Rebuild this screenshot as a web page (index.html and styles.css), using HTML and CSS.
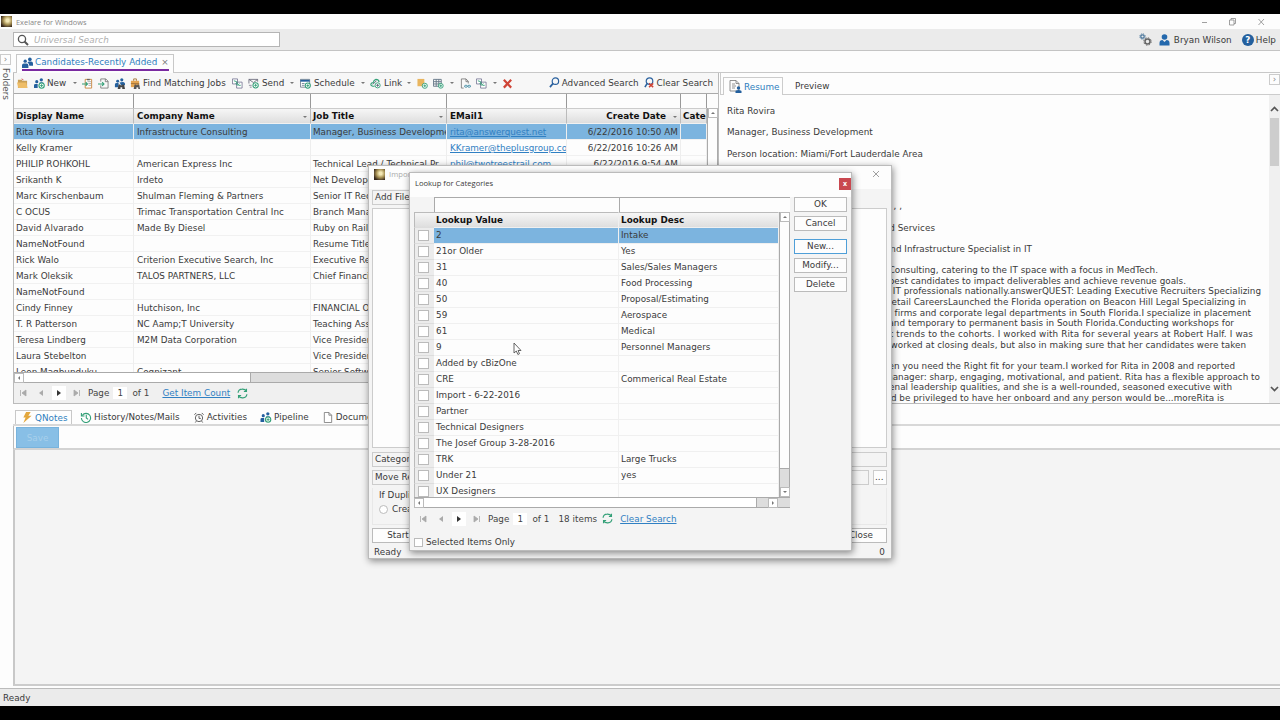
FILE: index.html
```html
<!DOCTYPE html>
<html lang="en">
<head>
  <meta charset="UTF-8" />
  <meta name="viewport" content="width=device-width, initial-scale=1.0"/>
  <title>Exelare for Windows</title>
  <link rel="stylesheet" href="styles.css">
</head>
<body>

<svg class="defs" width="0" height="0">
  <symbol id="people" viewBox="0 0 12 12"><g fill="#24609e"><circle cx="3.5" cy="4.5" r="1.8"/><circle cx="8.6" cy="2.6" r="2"/><path d="M0 12V9q0-2 2-2h3q2 0 2 2v3zM6 6.300q.5-1.300 2-1.300h2q2 0 2 2v2.500H8Q8 7 6 6.300z"/></g></symbol>
  <symbol id="people-add" viewBox="0 0 12 12"><g fill="#24609e"><circle cx="3" cy="4" r="1.700"/><circle cx="8" cy="2" r="1.800"/><path d="M0 11V8q0-1.500 1.500-1.500H4V11zM6 5q4-1 5 1H6z"/></g><circle cx="8.300" cy="8.300" r="2.900" fill="#fff" stroke="#34a078" stroke-width="1.200"/><path d="M8.300 6.700v3.200M6.700 8.300h3.200" stroke="#34a078"/></symbol>
  <symbol id="people-find" viewBox="0 0 12 12"><g fill="#24609e"><circle cx="4" cy="3.500" r="1.600"/><circle cx="8.500" cy="2" r="1.700"/><path d="M1 10V7q0-1.500 2-1.500h2V10zM6 5q5-1.500 6 1v2H8z"/></g><path d="M5 7h2v1h2V7h2l1 5H9v-2H7v2H4z" fill="#444"/></symbol>
  <symbol id="folder" viewBox="0 0 12 12"><path d="M1 11V2h4l1 1h5v8z" fill="#c99f55"/><path d="M0 5h10l1.500 6H1.500z" fill="#eebd67"/><path d="M5 1l2 1" stroke="#c55" /></symbol>
  <symbol id="clip" viewBox="0 0 12 12"><path d="M3.500 1.500h7v9.500h-7z" fill="#fff" stroke="#c8873e"/><path d="M6 4h4M7 6h3M7 8h3" stroke="#888" stroke-width=".7"/><path d="M5.500 1h3v1.500h-3z" fill="#666"/><path d="M0 6.500h6M4 4.500l2 2-2 2" fill="none" stroke="#34a078" stroke-width="1.200"/></symbol>
  <symbol id="page-in" viewBox="0 0 12 12"><path d="M3 4V1h5.500L11 3.500V11H3V8M8 1v3h3" fill="none" stroke="#666" stroke-width=".8"/><path d="M0 6.500h6.500M4.500 4.500l2 2-2 2" fill="none" stroke="#34a078" stroke-width="1.200"/></symbol>
  <symbol id="case-find" viewBox="0 0 12 12"><path d="M1 3h9v7H1z" fill="#e3a451"/><path d="M4 3V1h3v2M1 6h9" fill="none" stroke="#a6763a"/><path d="M5 7h2v1h1V7h2l1 5H9v-2H7v2H4z" fill="#555"/></symbol>
  <symbol id="copy-go" viewBox="0 0 12 12"><path d="M.5 1h5.500v5.500H.5zM5 4.500h6V11H5z" fill="#fff" stroke="#668" stroke-width=".8"/><path d="M2 3q4 0 4 4M4 5.500L6 8l2-2M7 8h2.500" fill="none" stroke="#34a078"/></symbol>
  <symbol id="mail-add" viewBox="0 0 12 12"><path d="M1 6V1.500h9.500V4M1 1.500l5 3.500 4.500-3.500" fill="none" stroke="#667" stroke-width=".9"/><circle cx="8.300" cy="8" r="2.900" fill="#fff" stroke="#34a078" stroke-width="1.100"/><path d="M8.300 6.500v3M6.800 8h3" stroke="#34a078"/><path d="M1 8h3M2 10h2" stroke="#889"/></symbol>
  <symbol id="cal-add" viewBox="0 0 12 12"><path d="M.5 1.500h10V10H.5z" fill="#fff" stroke="#567" stroke-width=".8"/><path d="M.5 2h10v2H.5z" fill="#24609e"/><path d="M2 6h3M2 8h3" stroke="#789"/><circle cx="8.500" cy="8.300" r="2.800" fill="#fff" stroke="#34a078" stroke-width="1.100"/><path d="M8.500 6.800v3M7 8.300h3" stroke="#34a078"/></symbol>
  <symbol id="link-add" viewBox="0 0 12 12"><path d="M5 9H3Q.5 8.500 1 6.500 1.500 5 3.500 5 4 2 6.500 1.500q3 0 3.500 3" fill="none" stroke="#34a078" stroke-width="1.200"/><path d="M3 7l4-4" stroke="#567"/><circle cx="8.300" cy="8" r="2.800" fill="#fff" stroke="#34a078"/><path d="M8.300 6.500v3M6.800 8h3" stroke="#567"/></symbol>
  <symbol id="note-add" viewBox="0 0 12 12"><path d="M.5 1H8v8H.5z" fill="#e9b55e"/><circle cx="8.500" cy="8.500" r="2.800" fill="#fff" stroke="#34a078"/><path d="M8.500 7v3M7 8.500h3" stroke="#34a078"/></symbol>
  <symbol id="grid-add" viewBox="0 0 12 12"><path d="M.5 1.500H9V9H.5zM.5 4H9M.5 6.500H9M3.500 1.500V9M6.300 1.500V9" fill="none" stroke="#678"/><circle cx="8.500" cy="8.500" r="2.600" fill="#fff" stroke="#34a078"/><path d="M8.500 7v3M7 8.500h3" stroke="#34a078"/></symbol>
  <symbol id="doc-link" viewBox="0 0 12 12"><path d="M4 11H1.500V1h5L9 3.500V6M6.500 1v3H9" fill="none" stroke="#666" stroke-width=".8"/><rect x="5" y="8" width="3" height="2" rx="1" fill="none" stroke="#34849e"/><rect x="8.500" y="8" width="3" height="2" rx="1" fill="none" stroke="#34849e"/></symbol>
  <symbol id="page" viewBox="0 0 12 12"><path d="M2 .5h5L10 3.500V11.500H2zM7 .5v3h3" fill="#fff" stroke="#777" stroke-width=".9"/></symbol>
  <symbol id="glass" viewBox="0 0 12 12"><circle cx="7" cy="4.500" r="3.500" fill="none" stroke="#29609e" stroke-width="1.300"/><path d="M4.500 7L1 11" stroke="#29609e" stroke-width="1.800"/></symbol>
  <symbol id="sync" viewBox="0 0 12 12"><path d="M1.200 5.200Q1.500 1.500 5.500 1.300 8.500 1 10.300 3.500M10.300.8v3H7.500M10.800 6.800Q10.300 10.500 6.500 10.700 3.500 11 1.700 8.500M1.700 11.200v-3h2.800" fill="none" stroke="#34a078" stroke-width="1.300"/></symbol>
  <symbol id="first" viewBox="0 0 8 8"><path d="M1.500 1v6M7 1L3 4l4 3z" stroke="currentColor" fill="currentColor" stroke-width=".8"/></symbol>
  <symbol id="prev" viewBox="0 0 8 8"><path d="M6 1L2 4l4 3z" fill="currentColor"/></symbol>
</svg>

<div class="app">
  <header class="titlebar">
    <i class="logo"></i><span>Exelare for Windows</span>
    <svg class="win-btns" width="70" height="12" viewBox="0 0 70 12"><path d="M1 6.500h5M28.500 4h4.500v5h-4.500zM30 4V2.500h4.500v5H33M57.500 3l5.500 6M63 3l-5.500 6" fill="none" stroke="#888" stroke-width=".8"/></svg>
  </header>

  <div class="searchbar">
    <div class="search"><svg width="12" height="12" viewBox="0 0 12 12"><circle cx="5" cy="5" r="3.600" fill="none" stroke="#555" stroke-width="1.300"/><path d="M7.500 7.500L11 11" stroke="#555" stroke-width="1.900"/></svg><em>Universal Search</em></div>
    <div class="user">
      <svg width="13" height="13" viewBox="0 0 13 13"><circle cx="3.500" cy="3.500" r="1.700" fill="none" stroke="#4c779c" stroke-width="1.200"/><circle cx="3.500" cy="3.500" r="2.700" fill="none" stroke="#4c779c" stroke-dasharray="1.100 1.020"/><circle cx="8.500" cy="8.500" r="2.500" fill="none" stroke="#666" stroke-width="1.500"/><circle cx="8.500" cy="8.500" r="3.700" fill="none" stroke="#666" stroke-dasharray="1.500 1.400"/></svg>
      <svg class="me" width="11" height="12" viewBox="0 0 11 12"><circle cx="5.500" cy="3" r="2.800" fill="#2469ad"/><path d="M.5 11.500V9q0-3 3-3l2 2 2-2q3 0 3 3v2.500z" fill="#2469ad"/></svg>
      <span class="name">Bryan Wilson</span>
      <span class="help-ico">?</span><span>Help</span>
    </div>
  </div>

  <div class="main">
    <aside class="folders"><b class="chev">&#8250;</b><span>Folders</span></aside>

    <div class="work">
      <div class="doc-tabs">
        <div class="doc-tab"><svg width="11" height="11"><use href="#people"/></svg><span>Candidates-Recently Added</span><i>×</i></div>
      </div>

      <div class="split">
        <section class="list">
          <div class="toolbar">
            <svg><use href="#folder"/></svg>
            <svg class="g4"><use href="#people-add"/></svg><span class="w-new">New</span><i class="dd"></i>
            <svg class="g3"><use href="#clip"/></svg>
            <svg class="g3"><use href="#page-in"/></svg>
            <svg class="g3"><use href="#people-find"/></svg>
            <svg class="g3"><use href="#case-find"/></svg><span class="w-find">Find Matching Jobs</span>
            <svg><use href="#copy-go"/></svg>
            <svg class="g3"><use href="#mail-add"/></svg><span class="w-send">Send</span><i class="dd"></i>
            <svg class="g4"><use href="#cal-add"/></svg><span class="w-sched">Schedule</span><i class="dd"></i>
            <svg class="g3"><use href="#link-add"/></svg><span class="w-link">Link</span><i class="dd"></i>
            <svg class="g4"><use href="#note-add"/></svg>
            <svg class="g3"><use href="#grid-add"/></svg><i class="dd gap"></i>
            <svg class="g4"><use href="#doc-link"/></svg>
            <svg class="g3"><use href="#copy-go"/></svg><i class="dd gap"></i>
            <svg class="g3" viewBox="0 0 12 12"><path d="M2 2l8 8.500M10 2l-8 8.500" stroke="#cf4436" stroke-width="2.400"/></svg>
            <div class="right">
              <svg><use href="#glass"/></svg><span>Advanced Search</span>
              <svg class="g3" viewBox="0 0 12 12"><circle cx="6" cy="4.500" r="3.600" fill="none" stroke="#29609e" stroke-width="1.300"/><path d="M3.500 7L1 11" stroke="#29609e" stroke-width="1.800"/><path d="M5.500 7l4.500 4M10 7l-4.500 4" stroke="#cf4436" stroke-width="1.600"/></svg><span>Clear Search</span>
            </div>
          </div>
          <div class="grid">
            <div class="grid-body">
              <div class="row filter"><span></span><span></span><span></span><span></span><span></span><span></span></div>
              <div class="row head"><span>Display Name</span><span>Company Name<i class="dd"></i></span><span>Job Title<i class="dd"></i></span><span>EMail1</span><span class="date">Create Date<i class="dd"></i></span><span>Cate</span></div>
              <div class="row sel"><span>Rita Rovira</span><span>Infrastructure Consulting</span><span>Manager, Business Developme</span><span><a>rita@answerquest.net</a></span><span class="date">6/22/2016 10:50 AM</span><span></span></div>
              <div class="row"><span>Kelly Kramer</span><span></span><span></span><span><a>KKramer@theplusgroup.co</a></span><span class="date">6/22/2016 10:26 AM</span><span></span></div>
              <div class="row"><span>PHILIP ROHKOHL</span><span>American Express Inc</span><span>Technical Lead / Technical Pr</span><span><a>phil@twotreestrail.com</a></span><span class="date">6/22/2016 9:54 AM</span><span></span></div>
              <div class="row"><span>Srikanth K</span><span>Irdeto</span><span>Net Developer</span><span></span><span></span><span></span></div>
              <div class="row"><span>Marc Kirschenbaum</span><span>Shulman Fleming &amp; Partners</span><span>Senior IT Recruiter</span><span></span><span></span><span></span></div>
              <div class="row"><span>C OCUS</span><span>Trimac Transportation Central Inc</span><span>Branch Manager</span><span></span><span></span><span></span></div>
              <div class="row"><span>David Alvarado</span><span>Made By Diesel</span><span>Ruby on Rails</span><span></span><span></span><span></span></div>
              <div class="row"><span>NameNotFound</span><span></span><span>Resume Title</span><span></span><span></span><span></span></div>
              <div class="row"><span>Rick Walo</span><span>Criterion Executive Search, Inc</span><span>Executive Recruiter</span><span></span><span></span><span></span></div>
              <div class="row"><span>Mark Oleksik</span><span>TALOS PARTNERS, LLC</span><span>Chief Financial</span><span></span><span></span><span></span></div>
              <div class="row"><span>NameNotFound</span><span></span><span></span><span></span><span></span><span></span></div>
              <div class="row"><span>Cindy Finney</span><span>Hutchison, Inc</span><span>FINANCIAL O</span><span></span><span></span><span></span></div>
              <div class="row"><span>T. R Patterson</span><span>NC Aamp;T University</span><span>Teaching Assistant</span><span></span><span></span><span></span></div>
              <div class="row"><span>Teresa Lindberg</span><span>M2M Data Corporation</span><span>Vice President</span><span></span><span></span><span></span></div>
              <div class="row"><span>Laura Stebelton</span><span></span><span>Vice President</span><span></span><span></span><span></span></div>
              <div class="row"><span>Leon Magbunduku</span><span>Cognizant</span><span>Senior Software</span><span></span><span></span><span></span></div>
            </div>
            <div class="vscroll"><b class="up"></b></div>
          </div>
          <div class="hscroll"><b class="left"></b><i class="thumb"></i></div>
          <div class="pager">
            <svg><use href="#first"/></svg><svg><use href="#prev"/></svg><svg class="on"><use href="#prev"/></svg><svg class="flip"><use href="#first"/></svg>
            <span>Page</span><span class="num">1</span><span class="of">of 1</span><a>Get Item Count</a><svg class="sync"><use href="#sync"/></svg>
          </div>
        </section>

        <section class="viewer">
          <div class="view-tabs">
            <div class="view-tab active"><svg width="13" height="13" viewBox="0 0 13 13"><path d="M1 .5h6L10 3.500V11H1zM7 .5v3h3M3 4h3M3 6h4M3 8h3" fill="none" stroke="#777" stroke-width=".8"/><circle cx="9.500" cy="8" r="1.700" fill="#24609e"/><path d="M6.500 13v-1.500q0-1.500 3-1.500t3 1.500V13z" fill="#24609e"/></svg>Resume</div>
            <div class="view-tab">Preview</div>
            <b class="chev">&#8250;</b>
          </div>
          <div class="resume">
            <div class="resume-text">
              <p>Rita Rovira</p><p>&nbsp;</p>
              <p>Manager, Business Development</p><p>&nbsp;</p>
              <p>Person location: Miami/Fort Lauderdale Area</p>
              <div class="tail">
                <p>, ,</p>
                <p>and Services</p>
                <p>and Infrastructure Specialist in IT</p>
                <p>Consulting, catering to the IT space with a focus in MedTech.</p>
                <p>best candidates to impact deliverables and achieve revenue goals.</p>
                <p>IT professionals nationally.answerQUEST: Leading Executive Recruiters Specializing</p>
                <p>Retail CareersLaunched the Florida operation on Beacon Hill Legal Specializing in</p>
                <p>law firms and corporate legal departments in South Florida.I specialize in placement</p>
                <p>and temporary to permanent basis in South Florida.Conducting workshops for</p>
                <p>t trends to the cohorts. I worked with Rita for several years at Robert Half. I was</p>
                <p>worked at closing deals, but also in making sure that her candidates were taken</p>
                <p>when you need the Right fit for your team.I worked for Rita in 2008 and reported</p>
                <p>manager: sharp, engaging, motivational, and patient. Rita has a flexible approach to</p>
                <p>enal leadership qualities, and she is a well-rounded, seasoned executive with</p>
                <p>would be privileged to have her onboard and any person would be...moreRita is</p>
              </div>
            </div>
            <div class="wscroll">
              <svg width="9" height="6" viewBox="0 0 9 6"><path d="M1 5l3.500-3.500L8 5" fill="none" stroke="#555" stroke-width="1.700"/></svg>
              <i></i>
              <svg class="down" width="9" height="6" viewBox="0 0 9 6"><path d="M1 1l3.500 3.500L8 1" fill="none" stroke="#555" stroke-width="1.700"/></svg>
            </div>
          </div>
        </section>
      </div>

      <div class="note-tabs">
        <div class="note-tab active"><svg viewBox="0 0 12 12"><path d="M5 0h5L7.500 4H11L2 12l2.500-6H2z" fill="#e3a73d"/></svg>QNotes</div>
        <div class="note-tab"><svg viewBox="0 0 12 12"><path d="M2 3.500a5 5 0 1 1-1 3M1 1v3.300h3.300M6.300 3v3.500l2 1.500" fill="none" stroke="#34a078" stroke-width="1.200"/></svg>History/Notes/Mails</div>
        <div class="note-tab"><svg viewBox="0 0 12 12"><circle cx="6" cy="6.500" r="4" fill="none" stroke="#555"/><path d="M6 4v3h2M1 3l2-2M11 3L9 1M3 10l-1 1.500M9 10l1 1.500" fill="none" stroke="#555"/></svg>Activities</div>
        <div class="note-tab"><svg><use href="#people-add"/></svg>Pipeline</div>
        <div class="note-tab"><svg><use href="#page"/></svg>Documents</div>
      </div>
      <div class="save-row"><button class="save">Save</button></div>
      <div class="notes"></div>
    </div>
  </div>

  <footer class="status">Ready</footer>
</div>

<div class="dialog import">
  <div class="import-title"><i class="logo"></i><span>Import</span><svg width="8" height="8" viewBox="0 0 8 8"><path d="M1 1l6 6M7 1L1 7" stroke="#888" stroke-width=".8"/></svg></div>
  <div class="field add">Add Files</div>
  <div class="files"></div>
  <div class="field cat">Categories</div>
  <div class="move"><div class="field">Move Resume</div><div class="field dots">...</div></div>
  <div class="dup"><span>If Duplicate</span><label><i class="radio"></i>Create</label></div>
  <div class="actions"><div class="btn">Start</div><div class="btn">Close</div></div>
  <div class="import-status"><span>Ready</span><span>0</span></div>
</div>

<div class="dialog lookup">
  <div class="lookup-title"><span>Lookup for Categories</span><b>x</b></div>
  <div class="lookup-body">
    <div class="lookup-list">
      <div class="lrow filter"><i></i><span></span><span></span></div>
      <div class="lgrid">
        <div class="lrows">
          <div class="lrow head"><i></i><span>Lookup Value</span><span>Lookup Desc</span></div>
          <div class="lrow sel"><i></i><span>2</span><span>Intake</span></div>
          <div class="lrow"><i></i><span>21or Older</span><span>Yes</span></div>
          <div class="lrow"><i></i><span>31</span><span>Sales/Sales Managers</span></div>
          <div class="lrow"><i></i><span>40</span><span>Food Processing</span></div>
          <div class="lrow"><i></i><span>50</span><span>Proposal/Estimating</span></div>
          <div class="lrow"><i></i><span>59</span><span>Aerospace</span></div>
          <div class="lrow"><i></i><span>61</span><span>Medical</span></div>
          <div class="lrow"><i></i><span>9</span><span>Personnel Managers</span></div>
          <div class="lrow"><i></i><span>Added by cBizOne</span><span></span></div>
          <div class="lrow"><i></i><span>CRE</span><span>Commerical Real Estate</span></div>
          <div class="lrow"><i></i><span>Import - 6-22-2016</span><span></span></div>
          <div class="lrow"><i></i><span>Partner</span><span></span></div>
          <div class="lrow"><i></i><span>Technical Designers</span><span></span></div>
          <div class="lrow"><i></i><span>The Josef Group 3-28-2016</span><span></span></div>
          <div class="lrow"><i></i><span>TRK</span><span>Large Trucks</span></div>
          <div class="lrow"><i></i><span>Under 21</span><span>yes</span></div>
          <div class="lrow"><i></i><span>UX Designers</span><span></span></div>
        </div>
        <div class="vscroll"><b class="up"></b><i class="thumb"></i><b class="down"></b></div>
      </div>
      <div class="hscroll"><b class="left"></b><i class="thumb"></i><b class="rt"></b></div>
      <div class="pager">
        <svg><use href="#first"/></svg><svg><use href="#prev"/></svg><svg class="on"><use href="#prev"/></svg><svg class="flip"><use href="#first"/></svg>
        <span>Page</span><span class="num">1</span><span class="of">of 1</span><span class="items">18 items</span><svg class="sync"><use href="#sync"/></svg><a>Clear Search</a>
      </div>
      <label class="only"><i></i>Selected Items Only</label>
    </div>
    <div class="lookup-btns">
      <div class="btn">OK</div>
      <div class="btn">Cancel</div>
      <div class="btn focus">New...</div>
      <div class="btn">Modify...</div>
      <div class="btn">Delete</div>
    </div>
  </div>
</div>

<svg class="cursor" width="9" height="14" viewBox="0 0 9 14"><path d="M1 1v10l2.300-2 1.600 3.500 1.600-.8L5 8.500h3z" fill="#fff" stroke="#555" stroke-width=".9"/></svg>

</body>
</html>
```
FILE: styles.css
```css
* {
  box-sizing: border-box;
}

body {
  margin: 0;
  width: 1280px;
  height: 720px;
  overflow: hidden;
  background: #000;
  color: #3a3a3a;
  font-family: Verdana, "DejaVu Sans", sans-serif;
  font-size: 8.8px;
  line-height: 12px;
  letter-spacing: 0.03px;
  white-space: nowrap;
}

svg {
  display: block;
  flex: none;
}

i {
  font-style: normal;
}

p {
  margin: 0;
}

a {
  color: #3080c3;
  text-decoration: underline;
}

.defs,
.cursor {
  position: absolute;
}

.cursor {
  left: 513px;
  top: 342px;
}

.app {
  margin-top: 14px;
  height: 692px;
  background: #fdfdfd;
  display: flex;
  flex-direction: column;
}

.logo {
  width: 11px;
  height: 11px;
  background: radial-gradient(circle at 60% 40%, #f3e7b4 0 15%, #a89255 45%, #35261b 80%);
  flex: none;
}

/* top bars */
.titlebar {
  display: flex;
  align-items: center;
  height: 15px;
  padding-left: 1px;
  font-family: "Open Sans", "Noto Sans", sans-serif;
  font-size: 7.4px;
  letter-spacing: 0;
  color: #888;
}

.titlebar span {
  margin-left: 4px;
}

.win-btns {
  margin-left: auto;
  margin-right: 9px;
}

.searchbar {
  height: 22px;
  display: flex;
  align-items: center;
  justify-content: space-between;
  background: #ebebeb;
  border-bottom: 1px solid #c4c4c4;
  padding: 0 4px 0 13px;
}

.search {
  display: flex;
  align-items: center;
  width: 267px;
  height: 15px;
  background: #fff;
  border: 1px solid #b5b5b5;
  padding-left: 3px;
}

.search em {
  color: #b0b0b0;
  margin-left: 5px;
}

.user {
  display: flex;
  align-items: center;
}

.user .me {
  margin: 0 4px 0 7px;
}

.user .name {
  width: 68px;
}

.help-ico {
  width: 12px;
  height: 12px;
  border-radius: 50%;
  background: #24609e;
  color: #fff;
  font-weight: bold;
  text-align: center;
  margin-right: 2px;
}

/* main frame */
.main {
  display: flex;
  height: 638px;
  border-bottom: 1px solid #bbb;
}

.folders {
  width: 13px;
  flex: none;
  display: flex;
  flex-direction: column;
  align-items: center;
  padding: 3px 2px 0 0;
  color: #555;
}

.folders span {
  writing-mode: vertical-rl;
  margin-top: 3px;
}

.chev {
  width: 11px;
  height: 11px;
  border: 1px solid #ccc;
  color: #888;
  line-height: 8px;
  font-weight: normal;
  text-align: center;
  flex: none;
}

.work {
  width: 1267px;
  display: flex;
  flex-direction: column;
}

.doc-tabs {
  height: 22px;
  padding: 3px 0 0 3px;
  border-bottom: 1px solid #c8c8c8;
}

.doc-tab {
  display: flex;
  align-items: center;
  width: 158px;
  height: 19px;
  padding: 0 0 4px 5px;
  background: linear-gradient(#7a2aa0, #7a2aa0) 5px 14px / 147px 2px no-repeat #fdfdfd;
  border: 1px solid #c8c8c8;
  border-bottom: 0;
  color: #2f7fbd;
}

.doc-tab span {
  margin: 0 4px 0 2px;
}

.doc-tab i {
  color: #777;
}

.split {
  display: flex;
  height: 331px;
}

.list {
  width: 706px;
  border-left: 1px solid #bbb;
  border-right: 1px solid #bbb;
  flex: none;
}

.toolbar {
  display: flex;
  align-items: center;
  height: 20px;
  padding-left: 3px;
  background: #f7f7f7;
}

.toolbar svg {
  width: 11px;
  height: 11px;
}

.toolbar span {
  margin-left: 3px;
}

.dd {
  width: 0;
  border: 2px solid transparent;
  border-top-color: #777;
  margin-top: 2px;
  flex: none;
}

.toolbar .g3 { margin-left: 5px; }
.toolbar .g4 { margin-left: 6px; }
.toolbar .gap { margin-left: 6px; }
.toolbar .w-new { width: 26px; margin-left: 2px; }
.toolbar .w-find { width: 89px; margin-left: 2px; }
.w-send { width: 28px; }
.w-sched { width: 47px; }
.w-link { width: 23px; }

.toolbar .right {
  display: flex;
  margin-left: auto;
  padding-right: 5px;
}

.toolbar .right span {
  margin-left: 2px;
}

/* candidate grid */
.grid {
  display: flex;
  height: 279px;
  border-top: 1px solid #aaa;
  overflow: hidden;
}

.grid-body {
  width: 693px;
  overflow: hidden;
}

.row {
  display: grid;
  grid-template-columns: 120px 177px 136px 120px 114px 26px;
  height: 16px;
}

.row span {
  border-right: 1px solid #eee;
  border-bottom: 1px solid #f1f1f1;
  padding: 2px 2px 0;
  overflow: hidden;
}

.row span:nth-child(2),
.row span:nth-child(4) {
  padding-left: 3px;
}

.row a {
  letter-spacing: -0.05px;
}

.row .date {
  text-align: right;
}

.row.filter {
  height: 14px;
}

.row.filter span {
  border-right-color: #999;
  border-bottom: 0;
}

.row.head span {
  display: flex;
  font-weight: bold;
  color: #111;
  background: linear-gradient(#f6f6f6, #dedede);
  border-top: 1px solid #ccc;
  border-right-color: #bbb;
  padding-top: 1px;
}

.row.head .dd {
  margin: 6px 1px 0 auto;
}

.row.head .date {
  justify-content: flex-end;
}

.row.head .date .dd {
  margin-left: 7px;
}

.row.sel span {
  background: #7cb4df;
}

.vscroll {
  display: flex;
  flex-direction: column;
  width: 11px;
  background: #fdfdfd;
  border: solid #aaa;
  border-width: 0 1px;
}

.grid .vscroll {
  margin-top: 14px;
}

.vscroll b,
.hscroll b {
  display: grid;
  place-items: center;
  width: 10px;
  height: 10px;
  background: #fff;
  border: 1px solid #bbb;
  flex: none;
}

.vscroll b::before,
.hscroll b::before {
  content: "";
  border: 2px solid transparent;
}

.vscroll .up::before { border-bottom-color: #777; margin-top: -2px; }
.vscroll .down::before { border-top-color: #777; margin-bottom: -2px; }
.hscroll .left::before { border-right-color: #777; margin-left: -2px; }
.hscroll .rt::before { border-left-color: #777; margin-right: -2px; }

.hscroll {
  display: flex;
  height: 11px;
  background: #ddd;
  border: solid #aaa;
  border-width: 1px 0;
}

.hscroll .thumb {
  width: 227px;
  background: #fff;
  border-right: 1px solid #aaa;
}

.pager {
  display: flex;
  align-items: center;
  height: 21px;
  background: #f0f0f0;
  color: #444;
  border-bottom: 1px solid #bbb;
  padding-left: 5px;
}

.pager svg {
  width: 8px;
  height: 8px;
  margin-right: 10px;
  color: #aaa;
}

.pager svg.on {
  transform: scaleX(-1);
  color: #333;
  background: #fff;
  box-shadow: 0 0 0 3px #fff;
}

.pager svg.flip {
  transform: scaleX(-1);
  margin-right: 7px;
}

.pager .num {
  width: 14px;
  text-align: center;
  background: #fff;
  margin: 0 5px 0 4px;
}

.pager a {
  margin-left: 13px;
}

.pager svg.sync {
  width: 11px;
  height: 11px;
  margin: 0 0 0 7px;
}

/* resume viewer */
.viewer {
  width: 560px;
  margin-left: 1px;
  border-bottom: 1px solid #bbb;
}

.view-tabs {
  display: flex;
  height: 22px;
  padding: 4px 0 0 2px;
  border-bottom: 1px solid #ccc;
  border-left: 1px solid #ccc;
}

.view-tab {
  display: flex;
  align-items: center;
  height: 18px;
  padding-left: 12px;
}

.view-tab.active {
  width: 60px;
  padding-left: 5px;
  background: #fdfdfd;
  border: 1px solid #ccc;
  border-bottom: 0;
  color: #2f7fbd;
}

.view-tab svg {
  margin-right: 2px;
}

.view-tabs .chev {
  margin: -3px 0 0 auto;
}

.resume {
  display: flex;
  height: 308px;
  padding-left: 7px;
  overflow: hidden;
}

.resume-text {
  flex: 1;
  padding-top: 11px;
  line-height: 10.65px;
}

.tail p {
  text-align: right;
  width: 520px;
}

/* line ends of the wrapped resume text */
.tail p:nth-child(1) { width: 175px; margin-top: 42px; }
.tail p:nth-child(2) { width: 208px; margin-top: 10.65px; }
.tail p:nth-child(3) { width: 305px; margin: 10.65px 0; }
.tail p:nth-child(4) { width: 431px; }
.tail p:nth-child(5) { width: 459px; }
.tail p:nth-child(6) { width: 534px; }
.tail p:nth-child(7) { width: 519px; }
.tail p:nth-child(8) { width: 524px; }
.tail p:nth-child(9) { width: 507px; }
.tail p:nth-child(10) { width: 526px; letter-spacing: 0.14px; }
.tail p:nth-child(11) { width: 519px; }
.tail p:nth-child(12) { width: 508px; margin-top: 10.65px; }
.tail p:nth-child(13) { width: 533px; }
.tail p:nth-child(14) { width: 505px; }
.tail p:nth-child(15) { width: 497px; }

.wscroll {
  display: flex;
  flex-direction: column;
  align-items: center;
  width: 11px;
  background: #f0f0f0;
  padding: 11px 0;
}

.wscroll i {
  width: 9px;
  height: 48px;
  margin-top: 6px;
  background: #cdcdcd;
}

.wscroll .down {
  margin-top: auto;
}

/* notes */
.note-tabs {
  display: flex;
  height: 22px;
  padding-top: 6px;
  padding-left: 2px;
  border-bottom: 2px solid #d8d8d8;
}

.note-tab {
  display: flex;
  align-items: center;
  padding: 0 0 0 8px;
  margin-right: 5px;
}

.note-tab svg {
  width: 12px;
  height: 11px;
  margin-right: 2px;
}

.note-tab.active {
  width: 57px;
  padding-left: 5px;
  margin-right: 0;
  border: 1px solid #c8c8c8;
  border-bottom: 0;
  color: #2f7fbd;
}

.save-row {
  height: 24px;
  padding: 1px 0 0 2px;
  border-left: 1px solid #bbb;
  border-bottom: 2px solid #d3d3d3;
}

.save {
  width: 43px;
  height: 21px;
  border: 1px solid #78b3dd;
  background: #88bfe6;
  color: #a7cfeb;
  font: inherit;
  padding: 0;
  display: block;
}

.notes {
  height: 236px;
  background: #f4f4f4;
  border-left: 2px solid #c8c8c8;
  border-bottom: 2px solid #ccc;
}

.status {
  flex: 1;
  background: #ebebeb;
  padding: 3px 3px 0;
}

/* dialogs */
.dialog {
  position: absolute;
  background: #f4f4f4;
  border: 1px solid #bbb;
  box-shadow: 1px 2px 7px rgba(0,0,0,0.45);
}

.import {
  left: 368px;
  top: 165px;
  width: 524px;
  height: 394px;
  padding: 0 4px 0 3px;
}

.import-title {
  display: flex;
  height: 23px;
  margin: 0 -4px 0 -3px;
  padding: 3px 11px 0 5px;
  background: #fdfdfd;
  font-family: "Open Sans", "Noto Sans", sans-serif;
  font-size: 7.6px;
  line-height: 11px;
  color: #aaa;
}

.import-title svg {
  margin-top: 1px;
}

.import-title span {
  margin-left: 4px;
  margin-right: auto;
}

.field,
.btn {
  height: 15px;
  padding: 0 2px;
  border: 1px solid #ccc;
}

.btn {
  background: #fdfdfd;
  text-align: center;
  border-color: #bbb;
}

.add {
  width: 100px;
  margin-top: 1px;
}

.files {
  height: 240px;
  margin: 3px 0 4px;
  background: #fdfdfd;
  border: 1px solid #ccc;
}

.move {
  display: flex;
  gap: 4px;
  margin-top: 3px;
}

.move .field {
  flex: 1;
}

.move .dots {
  flex: 0 0 14px;
  padding: 0 1px;
  background: #fdfdfd;
}

.dup {
  height: 37px;
  margin-top: 3px;
  padding: 0 6px;
  line-height: 14px;
  border: 1px solid #e8e8e8;
  border-top: 0;
}

.dup label {
  display: flex;
  align-items: center;
}

.radio {
  width: 9px;
  height: 9px;
  margin-right: 4px;
  background: #fff;
  border: 1px solid #bbb;
  border-radius: 50%;
}

.actions {
  display: flex;
  justify-content: space-between;
  margin-top: 3px;
}

.actions .btn {
  width: 52px;
}

.import-status {
  display: flex;
  justify-content: space-between;
  padding: 3px 2px;
}

.lookup {
  left: 409px;
  top: 172px;
  width: 443px;
  height: 379px;
}

.lookup-title {
  display: flex;
  justify-content: space-between;
  height: 24px;
  padding: 5px 0 0 5px;
  background: #fdfdfd;
  font-family: "Open Sans", "Noto Sans", sans-serif;
  font-size: 7.6px;
  letter-spacing: 0;
}

.lookup-title span {
  margin-top: -1px;
}

.lookup-title b {
  width: 12px;
  height: 12px;
  background: #c94850;
  color: #fff;
  font-size: 7px;
  line-height: 11px;
  text-align: center;
}

.lookup-body {
  display: flex;
  gap: 4px;
  padding-left: 4px;
}

.lookup-list {
  width: 376px;
}

.lgrid {
  display: flex;
  height: 285px;
}

.lrows {
  width: 365px;
  overflow: hidden;
}

.lrow {
  display: grid;
  grid-template-columns: 20px 185px 160px;
  height: 16px;
}

.lrow i {
  background: #ececec;
  padding: 2px 3px;
  border-bottom: 1px solid #ddd;
  border-left: 1px solid #bbb;
}

.lrow i::before {
  content: "";
  display: block;
  width: 9px;
  height: 9px;
  background: #fff;
  border: 1px solid #bbb;
}

.lrow span {
  padding: 1px 2px 0;
  background: #fdfdfd;
  border-right: 1px solid #f0f0f0;
  border-bottom: 1px solid #f0f0f0;
}

.lrow.filter {
  height: 15px;
  width: 376px;
  grid-template-columns: 20px 185px 171px;
}

.lrow.filter i {
  background: none;
  border: 0;
}

.lrow.filter i::before,
.lrow.head i::before {
  display: none;
}

.lrow.filter span {
  border: solid #aaa;
  border-width: 1px 0 0 1px;
}

.lrow.head i,
.lrow.head span {
  background: linear-gradient(#f6f6f6, #dedede);
  border-top: 1px solid #bbb;
}

.lrow.head span {
  color: #111;
  font-weight: bold;
  padding-top: 1px;
}

.lrow.sel span {
  background: #7cb4df;
}

.lgrid .vscroll {
  background: #ddd;
}

.lgrid .vscroll .thumb {
  flex: 1;
  margin-bottom: 18px;
  background: #fdfdfd;
  border-bottom: 1px solid #aaa;
}

.lookup .hscroll .thumb {
  width: 333px;
}

.lookup .hscroll .rt {
  margin-left: 11px;
}

.lookup .pager {
  background: none;
  border: 0;
}

.lookup .pager a {
  margin-left: 7px;
}

.items {
  margin-left: 9px;
}

.lookup .pager svg.sync {
  margin-left: 5px;
}

.only {
  display: flex;
  align-items: center;
  margin-top: 7px;
}

.only i {
  width: 9px;
  height: 9px;
  background: #fff;
  border: 1px solid #bbb;
  margin-right: 3px;
}

.lookup-btns {
  width: 53px;
}

.lookup-btns .btn {
  margin-bottom: 4px;
}

.lookup-btns .focus {
  margin-top: 8px;
  border-color: #4f9fd8;
}
```
